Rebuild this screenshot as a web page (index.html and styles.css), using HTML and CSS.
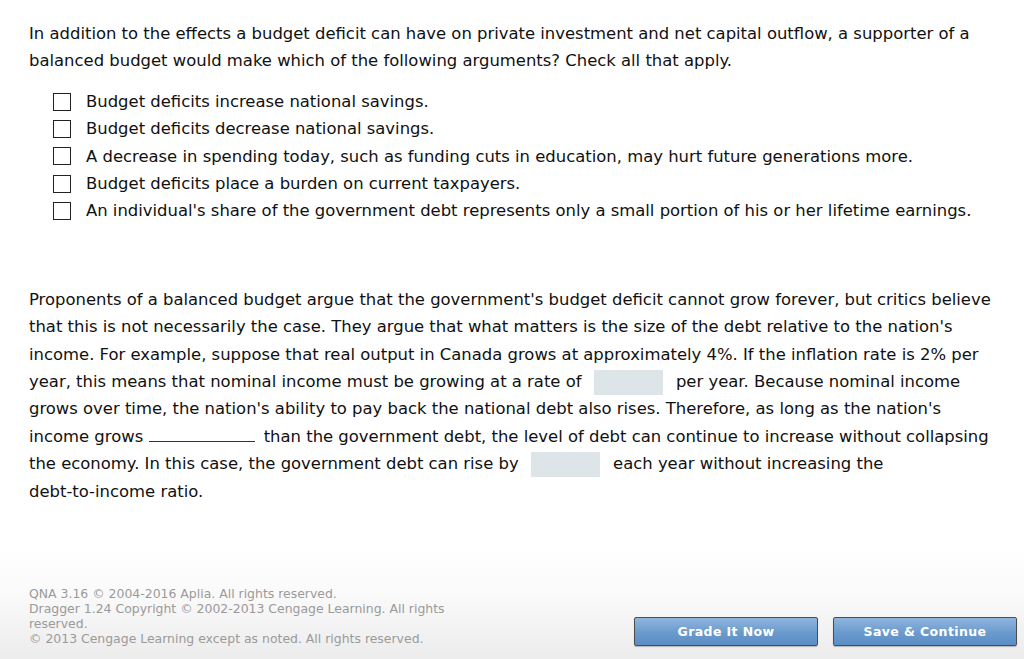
FILE: index.html
```html
<!DOCTYPE html>
<html lang="en">
<head>
<meta charset="utf-8">
<title>Budget deficit question</title>
<link rel="stylesheet" href="styles.css">
</head>
<body>
<div class="page">
  <main class="content">
    <p class="question">In addition to the effects a budget deficit can have on private investment and net capital outflow, a supporter of a balanced budget would make which of the following arguments? Check all that apply.</p>
    <ul class="choices">
      <li class="choice"><span class="box"></span><span>Budget deficits increase national savings.</span></li>
      <li class="choice"><span class="box"></span><span>Budget deficits decrease national savings.</span></li>
      <li class="choice"><span class="box"></span><span>A decrease in spending today, such as funding cuts in education, may hurt future generations more.</span></li>
      <li class="choice"><span class="box"></span><span>Budget deficits place a burden on current taxpayers.</span></li>
      <li class="choice"><span class="box"></span><span>An individual's share of the government debt represents only a small portion of his or her lifetime earnings.</span></li>
    </ul>
    <p class="passage">Proponents of a balanced budget argue that the government's budget deficit cannot grow forever, but critics believe that this is not necessarily the case. They argue that what matters is the size of the debt relative to the nation's income. For example, suppose that real output in Canada grows at approximately 4%. If the inflation rate is 2% per year, this means that nominal income must be growing at a rate of <span class="drop drop-a"></span> per year. Because nominal income grows over time, the nation's ability to pay back the national debt also rises. Therefore, as long as the nation's income grows <span class="blank"></span> than the government debt, the level of debt can continue to increase without collapsing the economy. In this case, the government debt can rise by <span class="drop drop-b"></span> each year without increasing the <span class="nowrap">debt-to-income</span> ratio.</p>
  </main>
  <footer class="footer">
    <div class="legal">
      <div>QNA 3.16 © 2004-2016 Aplia. All rights reserved.</div>
      <div>Dragger 1.24 Copyright © 2002-2013 Cengage Learning. All rights reserved.</div>
      <div>© 2013 Cengage Learning except as noted. All rights reserved.</div>
    </div>
    <div class="actions">
      <button class="btn" type="button">Grade It Now</button>
      <button class="btn" type="button">Save &amp; Continue</button>
    </div>
  </footer>
</div>
</body>
</html>
```

FILE: styles.css
```css
html, body {
  margin: 0;
  padding: 0;
  background: #ffffff;
}
body {
  font-family: "DejaVu Sans", Verdana, sans-serif;
  color: #111;
}
.page {
  width: 1024px;
  height: 659px;
  display: flex;
  flex-direction: column;
  overflow: hidden;
}
.content {
  flex: 1;
  padding: 20px 24px 0 29px;
  font-size: 16.43px;
  line-height: 27.4px;
}
.question {
  margin: 0;
}
.nowrap {
  white-space: nowrap;
}
.choices {
  list-style: none;
  margin: 13px 0 0 0;
  padding: 0 0 0 24px;
}
.choice {
  display: flex;
  align-items: center;
  gap: 15px;
}
.box {
  flex: none;
  box-sizing: border-box;
  width: 18px;
  height: 18px;
  border: 1.5px solid #222;
  background: #fff;
}
.passage {
  margin: 61px 0 0 0;
}
.drop {
  display: inline-block;
  width: 69px;
  height: 25px;
  background: #dde5e8;
  vertical-align: middle;
  margin: 0 8px 0 7px;
}
.blank {
  display: inline-block;
  width: 106px;
  border-bottom: 1px solid #333;
  height: 14px;
  margin: 0 3px 0 1px;
}
.footer {
  height: 110px;
  display: flex;
  align-items: flex-end;
  justify-content: space-between;
  padding: 0 7px 12px 29px;
  background: linear-gradient(#ffffff 0%, #fafafa 40%, #ececec 100%);
  box-sizing: border-box;
}
.legal {
  width: 430px;
  font-size: 12.45px;
  line-height: 15px;
  color: #9a9a9a;
  margin-bottom: 1px;
}
.actions {
  display: flex;
  gap: 15px;
  padding-bottom: 1px;
}
.btn {
  width: 184px;
  height: 29px;
  border: 1px solid #4d4d4d;
  border-radius: 2px;
  background: linear-gradient(#90b5dd, #6a9acd 55%, #5b8ec6);
  color: #fff;
  font-family: "DejaVu Sans", sans-serif;
  font-weight: bold;
  font-size: 12.5px;
  letter-spacing: 0.4px;
  box-shadow: 0 1px 1px rgba(0,0,0,0.25);
  padding: 0;
  cursor: pointer;
}
```
